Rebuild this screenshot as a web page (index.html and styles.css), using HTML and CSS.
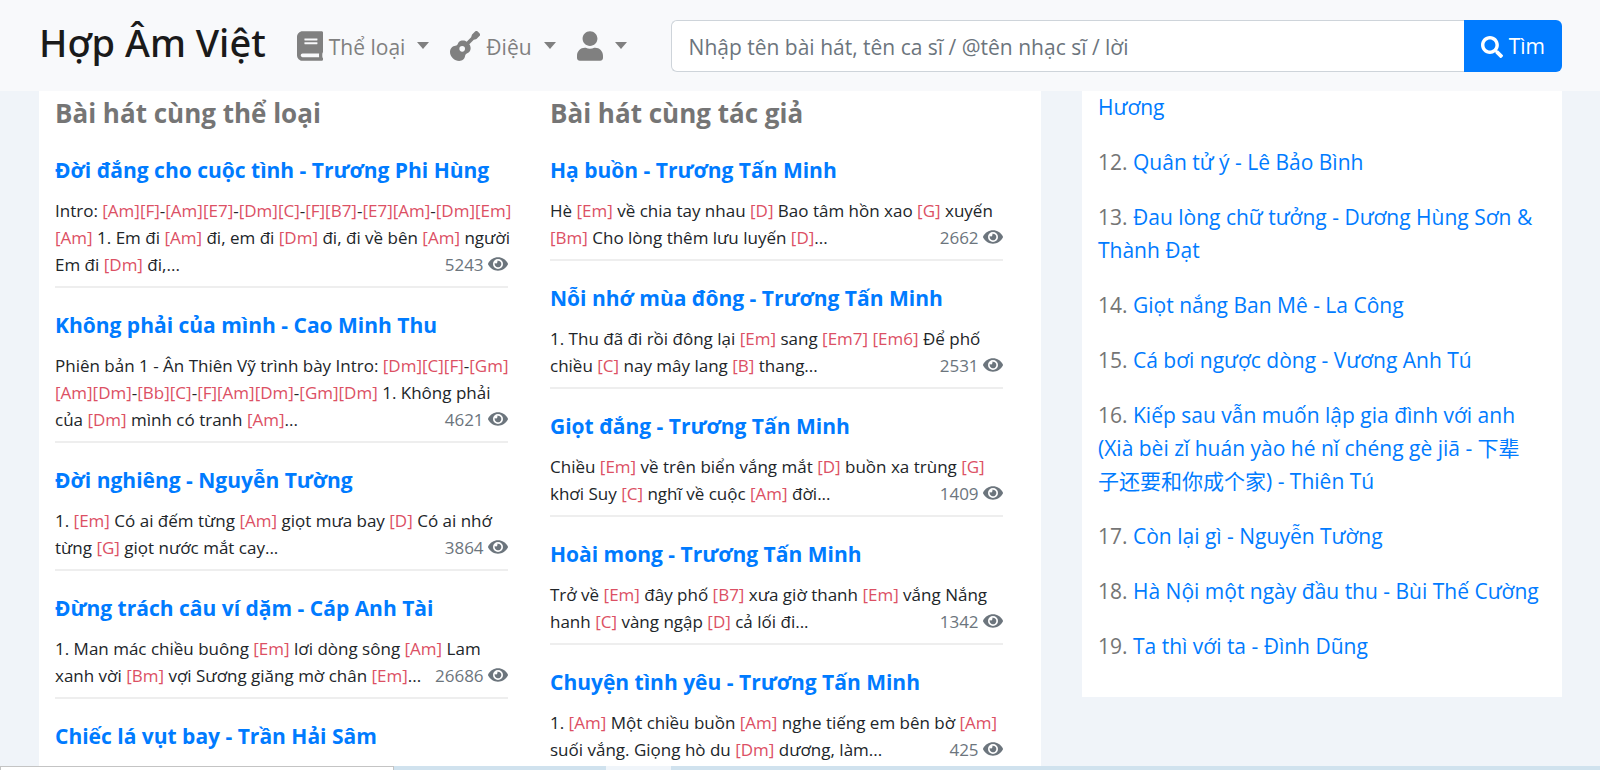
FILE: index.html
```html
<!DOCTYPE html>
<html lang="vi">
<head>
    <meta charset="UTF-8">
    <meta name="viewport" content="width=device-width, initial-scale=1.0">
    <title>Hợp Âm Việt</title>
    <link rel="stylesheet" href="styles.css">
</head>
<body>
    <svg class="sprite" aria-hidden="true">
        <symbol id="book" viewBox="0 0 448 512"><path d="M448 360V24c0-13.3-10.7-24-24-24H96C43 0 0 43 0 96v320c0 53 43 96 96 96h328c13.3 0 24-10.7 24-24v-16c0-7.5-3.5-14.3-8.9-18.7-4.2-15.4-4.2-59.3 0-74.7 5.4-4.3 8.9-11.1 8.9-18.6zM128 134c0-3.3 2.7-6 6-6h212c3.3 0 6 2.7 6 6v20c0 3.3-2.7 6-6 6H134c-3.3 0-6-2.7-6-6v-20zm0 64c0-3.3 2.7-6 6-6h212c3.3 0 6 2.7 6 6v20c0 3.3-2.7 6-6 6H134c-3.3 0-6-2.7-6-6v-20zm253.4 250H96c-17.7 0-32-14.3-32-32 0-17.6 14.4-32 32-32h285.4c-1.9 17.1-1.9 46.9 0 64z"/></symbol>
        <symbol id="guitar" viewBox="0 0 512 512"><path d="M502.63 39L473 9.37a32 32 0 0 0-45.26 0L381.46 55.7a35.14 35.14 0 0 0-8.53 13.79L360.77 106l-76.26 76.26c-12.16-8.76-25.5-15.74-40.1-19.14-33.45-7.78-67-.88-89.88 22a82.45 82.45 0 0 0-20.24 33.47c-6 18.56-23.21 32.69-42.15 34.46-23.7 2.27-45.73 11.45-62.61 28.44C-16.11 327-7.9 409 47.58 464.45S185 528 230.56 482.52c17-16.88 26.16-38.9 28.45-62.71 1.76-18.85 15.89-36.13 34.43-42.14a82.6 82.6 0 0 0 33.48-20.25c22.87-22.88 29.74-56.36 22-89.75-3.39-14.64-10.37-28-19.16-40.2L406 151.23l36.48-12.16a35.14 35.14 0 0 0 13.79-8.53l46.33-46.32a32 32 0 0 0 .03-45.22zM208 352a48 48 0 1 1 48-48 48 48 0 0 1-48 48z"/></symbol>
        <symbol id="user" viewBox="0 0 448 512"><path d="M224 256c70.7 0 128-57.3 128-128S294.7 0 224 0 96 57.3 96 128s57.3 128 128 128zm89.6 32h-16.7c-22.2 10.2-46.9 16-72.9 16s-50.6-5.8-72.9-16h-16.7C60.2 288 0 348.2 0 422.4V464c0 26.5 21.5 48 48 48h352c26.5 0 48-21.5 48-48v-41.6c0-74.2-60.2-134.4-134.4-134.4z"/></symbol>
        <symbol id="search" viewBox="0 0 512 512"><path d="M505 442.7L405.3 343c-4.5-4.5-10.6-7-17-7H372c27.6-35.3 44-79.7 44-128C416 93.1 322.9 0 208 0S0 93.1 0 208s93.1 208 208 208c48.3 0 92.7-16.4 128-44v16.3c0 6.4 2.5 12.5 7 17l99.7 99.7c9.4 9.4 24.6 9.4 33.9 0l28.3-28.3c9.4-9.4 9.4-24.6.1-34zM208 336c-70.7 0-128-57.2-128-128 0-70.7 57.2-128 128-128 70.7 0 128 57.2 128 128 0 70.7-57.2 128-128 128z"/></symbol>
        <symbol id="eye" viewBox="0 0 576 512"><path d="M572.52 241.4C518.29 135.59 410.93 64 288 64S57.68 135.64 3.48 241.41a32.35 32.35 0 0 0 0 29.19C57.71 376.41 165.07 448 288 448s230.32-71.64 284.52-177.41a32.35 32.35 0 0 0 0-29.19zM288 400a144 144 0 1 1 144-144 143.93 143.93 0 0 1-144 144zm0-240a95.31 95.31 0 0 0-25.31 3.79 47.85 47.85 0 0 1-66.9 66.9A95.78 95.78 0 1 0 288 160z"/></symbol>
    </svg>

    <header class="navbar">
        <a class="brand" href="#">Hợp Âm Việt</a>
        <nav class="menu">
            <button class="menu-item" type="button"><svg class="icon icon-book"><use href="#book"/></svg><span class="menu-label">Thể loại</span><span class="caret"></span></button>
            <button class="menu-item" type="button"><svg class="icon icon-guitar"><use href="#guitar"/></svg><span class="menu-label">Điệu</span><span class="caret"></span></button>
            <button class="menu-item" type="button" aria-label="Tài khoản"><svg class="icon icon-user"><use href="#user"/></svg><span class="caret"></span></button>
        </nav>
        <form class="search">
            <input class="search-input" type="text" aria-label="Tìm bài hát" placeholder="Nhập tên bài hát, tên ca sĩ / @tên nhạc sĩ / lời">
            <button class="search-button" type="submit"><svg class="icon icon-search"><use href="#search"/></svg>Tìm</button>
        </form>
    </header>

    <main class="page">
        <div class="card related">
            <section>
                <h2 class="heading">Bài hát cùng thể loại</h2>
                <article class="song">
                    <h3 class="song-title"><a href="#">Đời đắng cho cuộc tình - Trương Phi Hùng</a></h3>
                    <p class="lyric">Intro: <i>[Am][F]</i>-<i>[Am][E7]</i>-<i>[Dm][C]</i>-<i>[F][B7]</i>-<i>[E7][Am]</i>-<i>[Dm][Em]</i><br><i>[Am]</i> 1. Em đi <i>[Am]</i> đi, em đi <i>[Dm]</i> đi, đi về bên <i>[Am]</i> người<br>Em đi <i>[Dm]</i> đi,...<span class="views">5243 <svg class="icon icon-eye"><use href="#eye"/></svg></span></p>
                </article>
                <article class="song">
                    <h3 class="song-title"><a href="#">Không phải của mình - Cao Minh Thu</a></h3>
                    <p class="lyric">Phiên bản 1 - Ân Thiên Vỹ trình bày Intro: <i>[Dm][C][F]</i>-<i>[Gm]</i><br><i>[Am][Dm]</i>-<i>[Bb][C]</i>-<i>[F][Am][Dm]</i>-<i>[Gm][Dm]</i> 1. Không phải<br>của <i>[Dm]</i> mình có tranh <i>[Am]</i>...<span class="views">4621 <svg class="icon icon-eye"><use href="#eye"/></svg></span></p>
                </article>
                <article class="song">
                    <h3 class="song-title"><a href="#">Đời nghiêng - Nguyễn Tường</a></h3>
                    <p class="lyric">1. <i>[Em]</i> Có ai đếm từng <i>[Am]</i> giọt mưa bay <i>[D]</i> Có ai nhớ<br>từng <i>[G]</i> giọt nước mắt cay...<span class="views">3864 <svg class="icon icon-eye"><use href="#eye"/></svg></span></p>
                </article>
                <article class="song">
                    <h3 class="song-title"><a href="#">Đừng trách câu ví dặm - Cáp Anh Tài</a></h3>
                    <p class="lyric">1. Man mác chiều buông <i>[Em]</i> lơi dòng sông <i>[Am]</i> Lam<br>xanh vời <i>[Bm]</i> vợi Sương giăng mờ chân <i>[Em]</i>...<span class="views">26686 <svg class="icon icon-eye"><use href="#eye"/></svg></span></p>
                </article>
                <article class="song">
                    <h3 class="song-title"><a href="#">Chiếc lá vụt bay - Trần Hải Sâm</a></h3>
                </article>
            </section>
            <section>
                <h2 class="heading">Bài hát cùng tác giả</h2>
                <article class="song">
                    <h3 class="song-title"><a href="#">Hạ buồn - Trương Tấn Minh</a></h3>
                    <p class="lyric">Hè <i>[Em]</i> về chia tay nhau <i>[D]</i> Bao tâm hồn xao <i>[G]</i> xuyến<br><i>[Bm]</i> Cho lòng thêm lưu luyến <i>[D]</i>...<span class="views">2662 <svg class="icon icon-eye"><use href="#eye"/></svg></span></p>
                </article>
                <article class="song">
                    <h3 class="song-title"><a href="#">Nỗi nhớ mùa đông - Trương Tấn Minh</a></h3>
                    <p class="lyric">1. Thu đã đi rồi đông lại <i>[Em]</i> sang <i>[Em7]</i> <i>[Em6]</i> Để phố<br>chiều <i>[C]</i> nay mây lang <i>[B]</i> thang...<span class="views">2531 <svg class="icon icon-eye"><use href="#eye"/></svg></span></p>
                </article>
                <article class="song">
                    <h3 class="song-title"><a href="#">Giọt đắng - Trương Tấn Minh</a></h3>
                    <p class="lyric">Chiều <i>[Em]</i> về trên biển vắng mắt <i>[D]</i> buồn xa trùng <i>[G]</i><br>khơi Suy <i>[C]</i> nghĩ về cuộc <i>[Am]</i> đời...<span class="views">1409 <svg class="icon icon-eye"><use href="#eye"/></svg></span></p>
                </article>
                <article class="song">
                    <h3 class="song-title"><a href="#">Hoài mong - Trương Tấn Minh</a></h3>
                    <p class="lyric">Trở về <i>[Em]</i> đây phố <i>[B7]</i> xưa giờ thanh <i>[Em]</i> vắng Nắng<br>hanh <i>[C]</i> vàng ngập <i>[D]</i> cả lối đi...<span class="views">1342 <svg class="icon icon-eye"><use href="#eye"/></svg></span></p>
                </article>
                <article class="song">
                    <h3 class="song-title"><a href="#">Chuyện tình yêu - Trương Tấn Minh</a></h3>
                    <p class="lyric">1. <i>[Am]</i> Một chiều buồn <i>[Am]</i> nghe tiếng em bên bờ <i>[Am]</i><br>suối vắng. Giọng hò du <i>[Dm]</i> dương, làm...<span class="views">425 <svg class="icon icon-eye"><use href="#eye"/></svg></span></p>
                </article>
            </section>
        </div>

        <aside class="card ranking">
            <p><a href="#">Hương</a></p>
            <p>12. <a href="#">Quân tử ý - Lê Bảo Bình</a></p>
            <p>13. <a href="#">Đau lòng chữ tưởng - Dương Hùng Sơn &amp;<br>Thành Đạt</a></p>
            <p>14. <a href="#">Giọt nắng Ban Mê - La Công</a></p>
            <p>15. <a href="#">Cá bơi ngược dòng - Vương Anh Tú</a></p>
            <p>16. <a href="#">Kiếp sau vẫn muốn lập gia đình với anh<br>(Xià bèi zǐ huán yào hé nǐ chéng gè jiā - 下辈<br>子还要和你成个家) - Thiên Tú</a></p>
            <p>17. <a href="#">Còn lại gì - Nguyễn Tường</a></p>
            <p>18. <a href="#">Hà Nội một ngày đầu thu - Bùi Thế Cường</a></p>
            <p>19. <a href="#">Ta thì với ta - Đình Dũng</a></p>
        </aside>
    </main>

    <div class="status-bar"><span class="status-link"></span><span class="status-tab"></span></div>
</body>
</html>
```
FILE: styles.css
```css
* {
    box-sizing: border-box;
}
body {
    margin: 0;
    height: 100vh;
    overflow: hidden;
    background: #f0f4f9;
    color: #757575;
    font-family: "Open Sans", "Noto Sans", "Noto Sans CJK SC", sans-serif;
    font-size: 21px;
    line-height: 33px;
}
a {
    color: #007bff;
    text-decoration: none;
}
button,
input {
    font: inherit;
}
.sprite {
    display: none;
}
.icon {
    fill: currentColor;
    flex: none;
}
.navbar {
    display: flex;
    align-items: center;
    height: 91px;
    padding: 0 38px 0 39px;
    background: #f8f9fb;
}
.brand {
    margin-right: 31px;
    padding-bottom: 6px;
    color: #1a1a1a;
    font-family: "Noto Sans", "Open Sans", sans-serif;
    font-size: 38px;
    font-weight: 500;
}
.menu {
    display: flex;
    gap: 21px;
}
.menu-item {
    display: flex;
    align-items: center;
    padding: 0;
    border: 0;
    background: none;
    color: #808080;
}
.menu-label {
    padding-top: 3px;
}
.icon-book,
.icon-user {
    width: 26px;
    height: 30px;
}
.icon-guitar {
    width: 30px;
    height: 30px;
}
.icon-book,
.icon-guitar {
    margin-right: 6px;
}
.caret {
    margin-left: 12px;
    border: 6px solid transparent;
    border-top: 7px solid currentColor;
    border-bottom: 0;
}
.search {
    display: flex;
    flex: 1;
    margin-left: 44px;
}
.search-input {
    flex: 1;
    min-width: 0;
    height: 52px;
    padding: 2px 17px 0;
    border: 1px solid #ced4da;
    border-right: 0;
    border-radius: 6px 0 0 6px;
    background: #fff;
    color: #495057;
}
.search-input::placeholder {
    color: #6c757d;
}
.search-button {
    display: flex;
    align-items: center;
    gap: 6px;
    padding: 2px 17px 0;
    border: 0;
    border-radius: 0 6px 6px 0;
    background: #007bff;
    color: #fff;
}
.icon-search {
    width: 22px;
    height: 22px;
}
.page {
    display: grid;
    grid-template-columns: minmax(0, 167fr) minmax(0, 80fr);
    align-items: start;
    gap: 41px;
    padding: 0 38px 0 39px;
}
.card {
    background: #fff;
}
.related {
    display: grid;
    grid-template-columns: repeat(2, minmax(0, 1fr));
    gap: 42px;
    min-height: calc(100vh - 91px);
    padding: 4px 38px 0 16px;
}
.heading {
    margin: 0 0 24px;
    font-size: 26px;
    line-height: 36px;
}
.song {
    margin-bottom: 22px;
    padding-bottom: 8px;
    border-bottom: 2px solid #eee;
}
.song:last-child {
    margin-bottom: 0;
    border-bottom: 0;
}
.song-title {
    margin: 0 0 12px;
    font-size: 21px;
    line-height: 30px;
}
.lyric {
    margin: 0;
    color: #212529;
    font-size: 17px;
    line-height: 27px;
    white-space: nowrap;
}
.lyric i {
    color: #dc5064;
    font-style: normal;
}
.views {
    float: right;
    color: #6c757d;
}
.icon-eye {
    width: 20px;
    height: 18px;
    vertical-align: -2px;
}
.ranking {
    padding: 0 16px 12px;
}
.ranking p {
    margin: 0 0 22px;
}

/* browser strip along the bottom edge */
.status-bar {
    position: fixed;
    right: 0;
    bottom: 0;
    left: 0;
    display: flex;
    height: 4px;
    background: #d0e2ee;
}
.status-link {
    width: 394px;
    border: 1px solid #c4c4c4;
    border-bottom: 0;
    background: #fff;
}
.status-tab {
    width: 65px;
    margin-left: 212px;
    background: #f0f5fa;
}
```
